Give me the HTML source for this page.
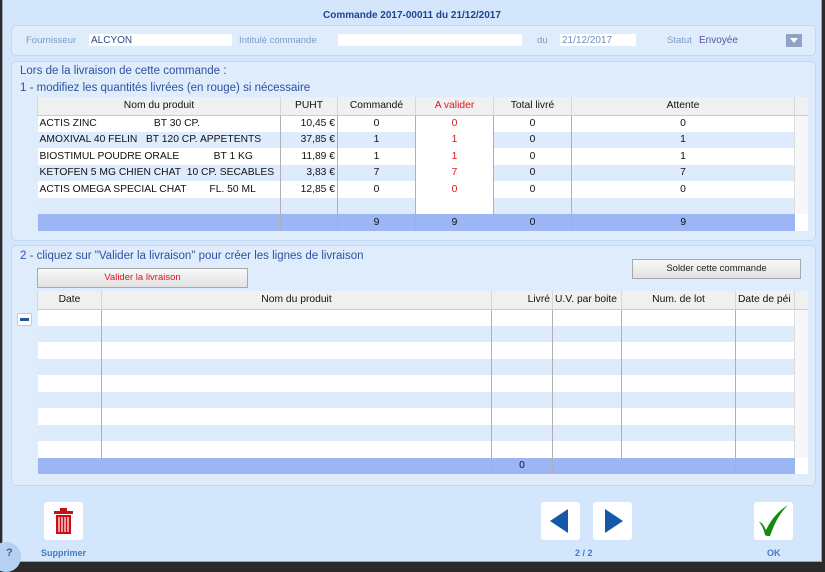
<!DOCTYPE html>
<html><head><meta charset="utf-8"><style>
*{box-sizing:border-box;margin:0;padding:0}
body{width:825px;height:566px;background:#2a2a2a;position:relative;overflow:hidden;font-family:"Liberation Sans",sans-serif}
.win{position:absolute;left:2px;top:0;width:820px;height:562px;background:#d3e6fb;border:1px solid #9aa6b4;border-top:none}
.a{position:absolute}
.panel{position:absolute;background:#deecfc;border:1px solid #c0d8f3;border-radius:5px}
.lbl{position:absolute;font-size:9.5px;color:#7c9cc8}
.fld{position:absolute;background:#fff;height:12px;font-size:10px;color:#2c4a8a;padding-left:2px;line-height:13px}
.blue{color:#2f51a0;font-size:11.5px;position:absolute}
table{border-collapse:collapse;position:absolute;table-layout:fixed;font-size:10.3px;color:#111}
td{height:16.5px;padding:0 2px;white-space:nowrap;overflow:hidden;border-left:1px solid #b0b0b0}
td:first-child{border-left:none}
tr.h td{background:#f0f0f0;height:18px;text-align:center;border-left:1px solid #d6d6d6;border-bottom:1px solid #ccc}
tr.w td{background:#fff}
tr.b td{background:#deebfd}
tr.t td{background:#9bb5f5}
.c{text-align:center}.r{text-align:right}.red{color:#e0141e}
td.sb{background:#f7f7f7!important;border-left:1px solid #ddd}
.btn{position:absolute;background:linear-gradient(#f8f8f8,#e2e2e2);border:1px solid #a8a8a8;font-size:9.5px;text-align:center}
.ib{position:absolute;background:#fff;border-radius:3px;width:39px;height:38px}
.bl{position:absolute;font-size:9px;font-weight:bold;color:#4a78c0}
</style></head><body>
<div class="win">
<div class="a" style="left:0;top:10px;width:818px;text-align:center;font-size:10px;font-weight:bold;color:#1f4590">Commande 2017-00011 du 21/12/2017</div>

<div class="panel" style="left:8px;top:25px;width:805px;height:31px"></div>
<div class="lbl" style="left:23px;top:35px">Fournisseur</div>
<div class="fld" style="left:86px;top:34px;width:143px">ALCYON</div>
<div class="lbl" style="left:236px;top:35px">Intitulé commande</div>
<div class="fld" style="left:335px;top:34px;width:184px"></div>
<div class="lbl" style="left:534px;top:35px">du</div>
<div class="fld" style="left:557px;top:34px;width:76px;color:#6f8fc2">21/12/2017</div>
<div class="lbl" style="left:664px;top:35px">Statut</div>
<div class="lbl" style="left:696px;top:35px;color:#5656a0;font-size:10px">Envoyée</div>
<div class="a" style="left:783px;top:34px;width:16px;height:13px;background:#8ea3c6"><svg width="16" height="13"><path d="M4 4h8l-4 5z" fill="#fff"/></svg></div>

<div class="panel" style="left:8px;top:61px;width:805px;height:180px"></div>
<div class="blue" style="left:17px;top:65px">Lors de la livraison de cette commande :</div>
<div class="blue" style="left:17px;top:82px">1 - modifiez les quantités livrées (en rouge) si nécessaire</div>
<table style="left:34px;top:97px;width:770px">
<colgroup><col style="width:243px"><col style="width:57px"><col style="width:78px"><col style="width:78px"><col style="width:78px"><col style="width:223px"><col style="width:13px"></colgroup>
<tr class="h"><td>Nom du produit</td><td>PUHT</td><td>Commandé</td><td class="red">A valider</td><td>Total livré</td><td>Attente</td><td></td></tr>
<tr class="w"><td>ACTIS ZINC&nbsp;&nbsp;&nbsp;&nbsp;&nbsp;&nbsp;&nbsp;&nbsp;&nbsp;&nbsp;&nbsp;&nbsp;&nbsp;&nbsp;&nbsp;&nbsp;&nbsp;&nbsp;&nbsp;&nbsp;BT 30 CP.</td><td class="r">10,45 €</td><td class="c">0</td><td class="c red" style="background:#fff">0</td><td class="c">0</td><td class="c">0</td><td class="sb"></td></tr>
<tr class="b"><td>AMOXIVAL 40 FELIN&nbsp;&nbsp;&nbsp;BT 120 CP. APPETENTS</td><td class="r">37,85 €</td><td class="c">1</td><td class="c red" style="background:#fff">1</td><td class="c">0</td><td class="c">1</td><td class="sb"></td></tr>
<tr class="w"><td>BIOSTIMUL POUDRE ORALE&nbsp;&nbsp;&nbsp;&nbsp;&nbsp;&nbsp;&nbsp;&nbsp;&nbsp;&nbsp;&nbsp;&nbsp;BT 1 KG</td><td class="r">11,89 €</td><td class="c">1</td><td class="c red" style="background:#fff">1</td><td class="c">0</td><td class="c">1</td><td class="sb"></td></tr>
<tr class="b"><td>KETOFEN 5 MG CHIEN CHAT&nbsp;&nbsp;10 CP. SECABLES</td><td class="r">3,83 €</td><td class="c">7</td><td class="c red" style="background:#fff">7</td><td class="c">0</td><td class="c">7</td><td class="sb"></td></tr>
<tr class="w"><td>ACTIS OMEGA SPECIAL CHAT&nbsp;&nbsp;&nbsp;&nbsp;&nbsp;&nbsp;&nbsp;&nbsp;FL. 50 ML</td><td class="r">12,85 €</td><td class="c">0</td><td class="c red" style="background:#fff">0</td><td class="c">0</td><td class="c">0</td><td class="sb"></td></tr>
<tr class="b"><td></td><td></td><td></td><td style="background:#fff"></td><td></td><td></td><td class="sb"></td></tr>
<tr class="t"><td></td><td></td><td class="c">9</td><td class="c">9</td><td class="c">0</td><td class="c">9</td><td style="background:#fff;border-left:none"></td></tr>
</table>

<div class="panel" style="left:8px;top:245px;width:805px;height:241px"></div>
<div class="blue" style="left:17px;top:250px">2 - cliquez sur "Valider la livraison" pour créer les lignes de livraison</div>
<div class="btn" style="left:34px;top:268px;width:211px;height:20px;line-height:18px;color:#e0141e">Valider la livraison</div>
<div class="btn" style="left:629px;top:259px;width:169px;height:20px;line-height:18px;color:#222">Solder cette commande</div>
<div class="a" style="left:14px;top:313px;width:15px;height:13px;background:#fff;border:1px solid #b9cbe6;border-radius:2px"><div style="position:absolute;left:2px;top:4px;width:9px;height:3px;background:#1f55a8"></div></div>
<table style="left:34px;top:291px;width:770px">
<colgroup><col style="width:64px"><col style="width:390px"><col style="width:61px"><col style="width:69px"><col style="width:114px"><col style="width:59px"><col style="width:13px"></colgroup>
<tr class="h"><td>Date</td><td>Nom du produit</td><td class="r" style="text-align:right">Livré</td><td style="text-align:left">U.V. par boite</td><td>Num. de lot</td><td style="text-align:left">Date de péi</td><td></td></tr>
<tr class="w"><td></td><td></td><td></td><td></td><td></td><td></td><td class="sb"></td></tr>
<tr class="b"><td></td><td></td><td></td><td></td><td></td><td></td><td class="sb"></td></tr>
<tr class="w"><td></td><td></td><td></td><td></td><td></td><td></td><td class="sb"></td></tr>
<tr class="b"><td></td><td></td><td></td><td></td><td></td><td></td><td class="sb"></td></tr>
<tr class="w"><td></td><td></td><td></td><td></td><td></td><td></td><td class="sb"></td></tr>
<tr class="b"><td></td><td></td><td></td><td></td><td></td><td></td><td class="sb"></td></tr>
<tr class="w"><td></td><td></td><td></td><td></td><td></td><td></td><td class="sb"></td></tr>
<tr class="b"><td></td><td></td><td></td><td></td><td></td><td></td><td class="sb"></td></tr>
<tr class="w"><td style="height:14px"></td><td></td><td></td><td></td><td></td><td></td><td class="sb"></td></tr>
<tr class="t"><td></td><td></td><td class="c">0</td><td></td><td></td><td></td><td style="background:#fff;border-left:none"></td></tr>
</table>

<div class="ib" style="left:41px;top:502px"><svg width="39" height="38"><path d="M10 9h19v3H10z M16 6h7v3h-7z" fill="#c80f14"/><path d="M12 13h15v19H12z" fill="#c80f14"/><path d="M15 15v15M18 15v15M21 15v15M24 15v15" stroke="#fff" stroke-width="1.2"/></svg></div>
<div class="bl" style="left:38px;top:548px">Supprimer</div>
<div class="ib" style="left:538px;top:502px"><svg width="39" height="38"><path d="M9 19L27 7v24z" fill="#1658a8"/></svg></div>
<div class="ib" style="left:590px;top:502px"><svg width="39" height="38"><path d="M30 19L12 7v24z" fill="#1658a8"/></svg></div>
<div class="bl" style="left:572px;top:548px">2 / 2</div>
<div class="ib" style="left:751px;top:502px"><svg width="39" height="38"><path d="M5 20c3 0 5 4 7 8 5-10 11-18 22-25-8 8-13 17-18 31-1 0-4 0-5-1-1-5-3-10-6-13z" fill="#138a10"/></svg></div>
<div class="bl" style="left:764px;top:548px">OK</div>
<div class="a" style="left:-12px;top:542px;width:30px;height:30px;border-radius:50%;background:#b5d0f0"></div>
<div class="a" style="left:3px;top:547px;font-size:11px;font-weight:bold;color:#2f5fae">?</div>
</div>
</body></html>
